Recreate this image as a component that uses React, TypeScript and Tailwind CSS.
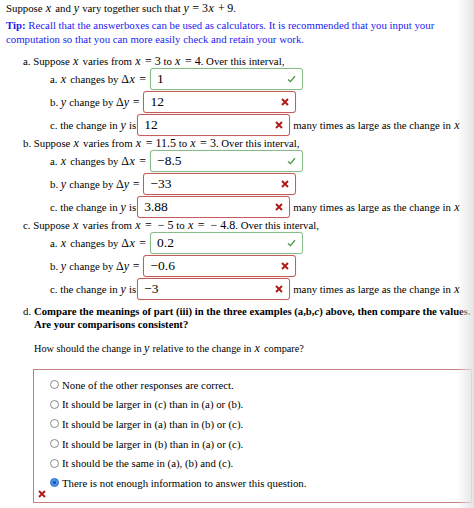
import React from "react";

const X = () => <span className="italic text-[12px] pl-[0.5px] pr-[1.5px]">x</span>;
const Y = () => <span className="italic text-[12px] pr-[0.5px]">y</span>;
const Eq = () => <span className="mx-[3px] text-[12px]">=</span>;
const N = ({ children }: { children: React.ReactNode }) => (
  <span className="text-[12px]">{children}</span>
);

function Check() {
  return (
    <svg width="9" height="8" viewBox="0 0 9 8" className="shrink-0">
      <path d="M1 4.5 L3.4 6.6 L8 1.2" fill="none" stroke="#4f9a4f" strokeWidth="1.4" />
    </svg>
  );
}
function Cross() {
  return (
    <svg width="8" height="8" viewBox="0 0 8 8" className="shrink-0">
      <path d="M1 1 L7 7 M7 1 L1 7" fill="none" stroke="#b01818" strokeWidth="1.9" />
    </svg>
  );
}

function Box({ value, ok }: { value: string; ok: boolean }) {
  return (
    <div
      className={
        ok
          ? "ml-[1px] w-[153px] h-[22px] shrink-0 rounded-[3px] border border-[#86bd86] shadow-[0_0_1px_#b9dcb9] flex items-center justify-between pl-[6px] pr-[6px] bg-white"
          : "ml-[1px] w-[153px] h-[22px] shrink-0 rounded-[3px] border border-[#c45e5e] shadow-[0_0_1px_#e0a9a9] flex items-center justify-between pl-[6px] pr-[6px] bg-white"
      }
    >
      <span className="text-[13.5px] leading-none">{value}</span>
      {ok ? <Check /> : <Cross />}
    </div>
  );
}

function Row({
  label,
  value,
  ok,
  after,
}: {
  label: React.ReactNode;
  value: string;
  ok: boolean;
  after?: boolean;
}) {
  return (
    <div className="flex items-start h-[23px] pl-[50px]">
      <span className="leading-[22px] whitespace-nowrap">{label}</span>
      <Box value={value} ok={ok} />
      {after && (
        <span className="leading-[22px] whitespace-nowrap ml-[3px]">
          many times as large as the change in <X />
        </span>
      )}
    </div>
  );
}

function Part({
  head,
  a,
  b,
  c,
}: {
  head: React.ReactNode;
  a: string;
  b: string;
  c: string;
}) {
  return (
    <div>
      <div className="pl-[23px] leading-[13px] h-[13px] whitespace-nowrap">{head}</div>
      <Row
        label={
          <>
            a. <X /> changes by <N>Δ</N>
            <X />
            <Eq />
          </>
        }
        value={a}
        ok={true}
      />
      <Row
        label={
          <>
            b. <Y /> change by <N>Δ</N>
            <Y />
            <Eq />
          </>
        }
        value={b}
        ok={false}
      />
      <Row
        label={
          <>
            c. the change in <Y /> is
          </>
        }
        value={c}
        ok={false}
        after
      />
    </div>
  );
}

function Radio({ checked }: { checked?: boolean }) {
  return checked ? (
    <span className="w-[9px] h-[9px] rounded-full bg-[#4a93ea] border border-[#2f74cf] flex items-center justify-center shrink-0">
      <span className="w-[3px] h-[3px] rounded-full bg-[#1b4f9e]" />
    </span>
  ) : (
    <span className="w-[9px] h-[9px] rounded-full border border-[#8a8a8a] bg-white shrink-0" />
  );
}

const options = [
  "None of the other responses are correct.",
  "It should be larger in (c) than in (a) or (b).",
  "It should be larger in (a) than in (b) or (c).",
  "It should be larger in (b) than in (a) or (c).",
  "It should be the same in (a), (b) and (c).",
  "There is not enough information to answer this question.",
];

export default function App() {
  return (
    <div
      className="relative w-[474px] h-[508px] overflow-hidden bg-white text-black text-[10.8px] font-['Liberation_Serif','Times_New_Roman',serif]"
      style={{ fontFamily: '"Liberation Serif", "Times New Roman", serif' }}
    >
      <div className="pt-[1px]">
        <div className="pl-[6px] leading-[14px] whitespace-nowrap">
          Suppose <X /> and <Y /> vary together such that <Y />
          <Eq />
          <N>3</N>
          <X />
          <span className="mx-[2.5px] text-[12px]">+</span>
          <N>9</N>.
        </div>
        <div className="pl-[6px] mt-[3px] leading-[14px] text-[#1c1cf0]">
          <b>Tip:</b> Recall that the answerboxes can be used as calculators. It is recommended
          that you input your computation so that you can more easily check and retain your work.
        </div>
        <div className="mt-[9px]">
          <Part
            head={
              <>
                a. Suppose <X /> varies from <X />
                <Eq />
                <N>3</N> to <X />
                <Eq />
                <N>4</N>. Over this interval,
              </>
            }
            a="1"
            b="12"
            c="12"
          />
          <Part
            head={
              <>
                b. Suppose <X /> varies from <X />
                <Eq />
                <N>11.5</N> to <X />
                <Eq />
                <N>3</N>. Over this interval,
              </>
            }
            a="−8.5"
            b="−33"
            c="3.88"
          />
          <Part
            head={
              <>
                c. Suppose <X /> varies from <X />
                <Eq />
                <span className="mx-[3px] text-[12px]">−</span>
                <N>5</N> to <X />
                <Eq />
                <span className="mx-[3px] text-[12px]">−</span>
                <N>4.8</N>. Over this interval,
              </>
            }
            a="0.2"
            b="−0.6"
            c="−3"
          />
        </div>
        <div className="flex mt-[4px] leading-[13px] font-bold whitespace-nowrap text-[10.7px]">
          <span className="pl-[23px] w-[34px] font-normal shrink-0 text-[10.8px]">d.</span>
          <span>
            Compare the meanings of part (iii) in the three examples (a,b,<i>c</i>) above, then
            compare the values.
            <br />
            Are your comparisons consistent?
          </span>
        </div>
        <div className="pl-[34px] mt-[10px] leading-[14px] whitespace-nowrap text-[10.3px]">
          How should the change in <Y /> relative to the change in <X /> compare?
        </div>
        <div className="ml-[33px] mr-[2px] mt-[13px] h-[134px] border border-[#c47f7f] pt-[5px] pl-[16px] relative">
          {options.map((o, i) => (
            <div key={i} className="flex items-center gap-[3px] h-[19.6px] leading-[14px]">
              <Radio checked={i === 5} />
              <span className="whitespace-nowrap">{o}</span>
            </div>
          ))}
          <div className="absolute left-[4px] bottom-[4px]">
            <Cross />
          </div>
        </div>
      </div>
      <div className="absolute right-0 top-0 h-full w-[17px] bg-gradient-to-r from-[#ffffff00] to-[#e4e4e4] pointer-events-none" />
    </div>
  );
}
